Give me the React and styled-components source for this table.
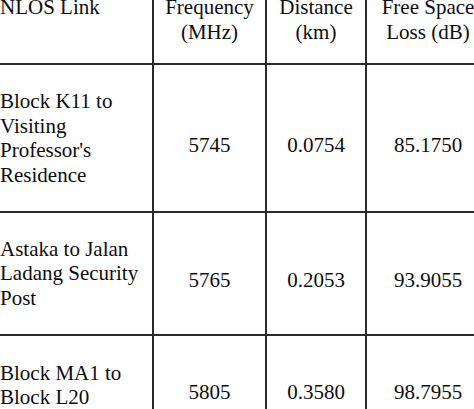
import React from 'react';
import styled, { createGlobalStyle, css } from 'styled-components';

const GlobalStyle = createGlobalStyle`
  html, body {
    margin: 0;
    padding: 0;
    background: #ffffff;
    overflow: hidden;
  }
`;

const Table = styled.div`
  display: grid;
  grid-template-columns: 158px 111px 98px 122px;
  grid-template-rows: 73px 146px 121px 98px;
  gap: 2px;
  background: #2a2a2a;
  border: 2px solid #2a2a2a;
  margin: -12px 0 0 -8px;
  width: max-content;
  font-family: "Liberation Serif", "Times New Roman", serif;
  font-size: 21px;
  line-height: 24.5px;
  color: #0d0d0d;
`;

const Cell = styled.div`
  background: #ffffff;
  display: flex;
  flex-direction: column;
  justify-content: center;
  align-items: center;
  text-align: center;

  ${props => props.$label && css`
    align-items: flex-start;
    text-align: left;
    padding-left: 6px;
  `}

  ${props => props.$head && css`
    justify-content: flex-start;
    padding-top: 5px;
  `}

  ${props => props.$value && css`
    padding-top: 14px;
  `}
`;

const headers = ['NLOS Link', 'Frequency (MHz)', 'Distance (km)', 'Free Space Loss (dB)'];

const links = [
  { name: "Block K11 to Visiting Professor's Residence", freq: '5745', dist: '0.0754', loss: '85.1750' },
  { name: 'Astaka to Jalan Ladang Security Post', freq: '5765', dist: '0.2053', loss: '93.9055' },
  { name: 'Block MA1 to Block L20', freq: '5805', dist: '0.3580', loss: '98.7955' },
];

const App = () => (
  <>
    <GlobalStyle />
    <Table>
      {headers.map((h, i) => (
        <Cell key={h} $head $label={i === 0}>{h}</Cell>
      ))}
      {links.map(link => (
        <React.Fragment key={link.name}>
          <Cell $label>{link.name}</Cell>
          <Cell $value>{link.freq}</Cell>
          <Cell $value>{link.dist}</Cell>
          <Cell $value>{link.loss}</Cell>
        </React.Fragment>
      ))}
    </Table>
  </>
);

export default App;
